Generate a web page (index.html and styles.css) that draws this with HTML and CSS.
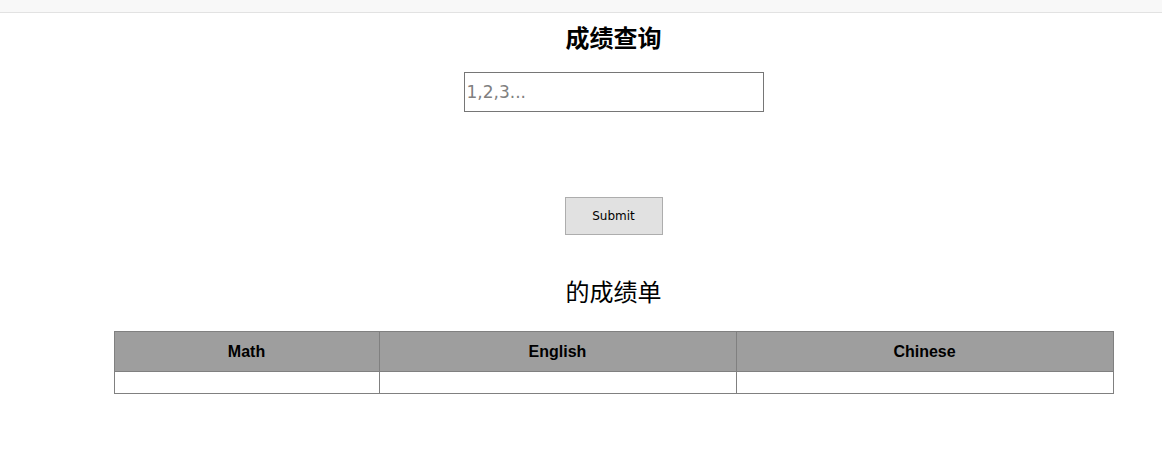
FILE: index.html
```html
<!DOCTYPE html>
<html lang="zh-CN">
<head>
    <meta charset="UTF-8">
    <title>成绩查询</title>
    <link rel="stylesheet" href="styles.css">
</head>
<body>
    <div class="topbar"></div>
    <div class="page">
        <h2 class="title">成绩查询</h2>
        <div class="query">
            <input type="text" class="ids" placeholder="1,2,3...">
        </div>
        <div class="actions">
            <button type="button" class="submit">Submit</button>
        </div>
        <h3 class="report-title">的成绩单</h3>
        <table class="scores">
            <thead>
                <tr>
                    <th class="col-math">Math</th>
                    <th class="col-english">English</th>
                    <th class="col-chinese">Chinese</th>
                </tr>
            </thead>
            <tbody>
                <tr>
                    <td></td>
                    <td></td>
                    <td></td>
                </tr>
            </tbody>
        </table>
    </div>
</body>
</html>
```

FILE: styles.css
```css
body {
    margin: 0;
    background: #fff;
    font-family: "Liberation Sans", Arial, "Noto Sans CJK SC", sans-serif;
    color: #000;
}
.topbar {
    height: 12px;
    background: #f8f8f8;
    border-bottom: 1px solid #e2e2e2;
}
.page {
    padding-left: 65px;
    text-align: center;
}
.title {
    margin: 0;
    padding-top: 10px;
    font-size: 24px;
    line-height: 28px;
    font-weight: bold;
    font-family: "Noto Sans CJK SC", sans-serif;
}
.query {
    margin-top: 21px;
}
.ids {
    box-sizing: border-box;
    width: 300px;
    height: 40px;
    margin: 0;
    padding: 0 2px;
    border: 1px solid #767676;
    font-family: "DejaVu Sans", Verdana, sans-serif;
    font-size: 17px;
    color: #000;
    outline: none;
}
.ids::placeholder {
    color: #808080;
}
.actions {
    margin-top: 85px;
}
.submit {
    box-sizing: border-box;
    width: 98px;
    height: 38px;
    background: #e1e1e1;
    border: 1px solid #adadad;
    border-radius: 0;
    font-family: "DejaVu Sans", Verdana, sans-serif;
    font-size: 12px;
    color: #000;
    cursor: pointer;
}
.report-title {
    margin: 0;
    padding-top: 42px;
    font-size: 24px;
    line-height: 28px;
    font-weight: normal;
    font-family: "Noto Sans CJK SC", sans-serif;
}
.scores {
    width: 1000px;
    margin: 26px auto 0;
    border-collapse: collapse;
    table-layout: fixed;
}
.scores th,
.scores td {
    border: 1px solid #808080;
    padding: 0;
}
.scores th {
    height: 39px;
    background: #9e9e9e;
    font-size: 16px;
    font-weight: bold;
}
.scores td {
    height: 21px;
}
.col-math { width: 264px; }
.col-english { width: 356px; }
```
